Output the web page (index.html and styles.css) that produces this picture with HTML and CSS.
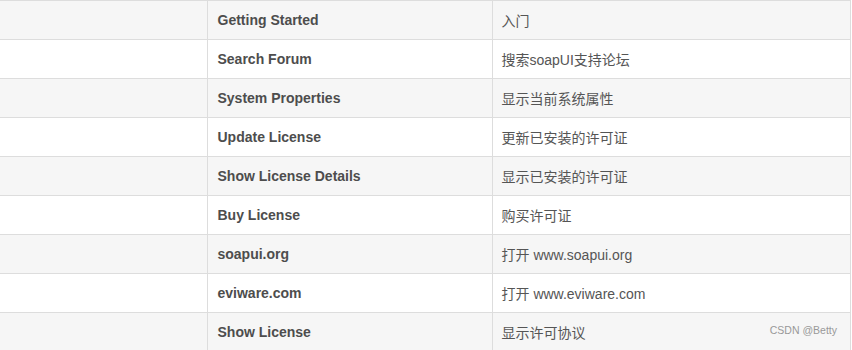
FILE: index.html
```html
<!DOCTYPE html>
<html lang="zh">
<head>
<meta charset="utf-8">
<link rel="stylesheet" href="styles.css">
</head>
<body>
<table class="tbl">
  <tbody>
    <tr class="alt"><td class="c1"></td><td class="c2">Getting Started</td><td class="c3">入门</td></tr>
    <tr><td class="c1"></td><td class="c2">Search Forum</td><td class="c3">搜索soapUI支持论坛</td></tr>
    <tr class="alt"><td class="c1"></td><td class="c2">System Properties</td><td class="c3">显示当前系统属性</td></tr>
    <tr><td class="c1"></td><td class="c2">Update License</td><td class="c3">更新已安装的许可证</td></tr>
    <tr class="alt"><td class="c1"></td><td class="c2">Show License Details</td><td class="c3">显示已安装的许可证</td></tr>
    <tr><td class="c1"></td><td class="c2">Buy License</td><td class="c3">购买许可证</td></tr>
    <tr class="alt"><td class="c1"></td><td class="c2">soapui.org</td><td class="c3">打开 www.soapui.org</td></tr>
    <tr><td class="c1"></td><td class="c2">eviware.com</td><td class="c3">打开 www.eviware.com</td></tr>
    <tr class="alt"><td class="c1"></td><td class="c2">Show License</td><td class="c3">显示许可协议</td></tr>
  </tbody>
</table>
<div class="watermark">CSDN @Betty</div>
</body>
</html>
```
FILE: styles.css
```css
html, body {
  margin: 0;
  padding: 0;
  background: #fff;
  overflow: hidden;
}
body {
  position: relative;
  width: 852px;
  height: 350px;
  font-family: "Liberation Sans", Arial, "Noto Sans CJK SC", sans-serif;
  color: #4d4d4d;
}
.tbl {
  border-collapse: collapse;
  width: 851px;
  table-layout: fixed;
}
.tbl td {
  border: 1px solid #dddddd;
  height: 39px;
  padding: 0 9px;
  box-sizing: border-box;
  font-size: 14px;
  vertical-align: middle;
  white-space: nowrap;
}
.tbl .c1 {
  width: 207px;
  border-left: none;
}
.tbl .c2 {
  width: 285px;
  font-weight: bold;
  color: #4d4d4d;
  padding-left: 10px;
}
.tbl .c3 {
  color: #555;
  padding-left: 9px;
}
.tbl tr.alt td {
  background: #f6f6f6;
}
.watermark {
  position: absolute;
  right: 15px;
  top: 324px;
  font-size: 10.5px;
  color: #999;
  font-family: "Liberation Sans", Arial, sans-serif;
}
```
